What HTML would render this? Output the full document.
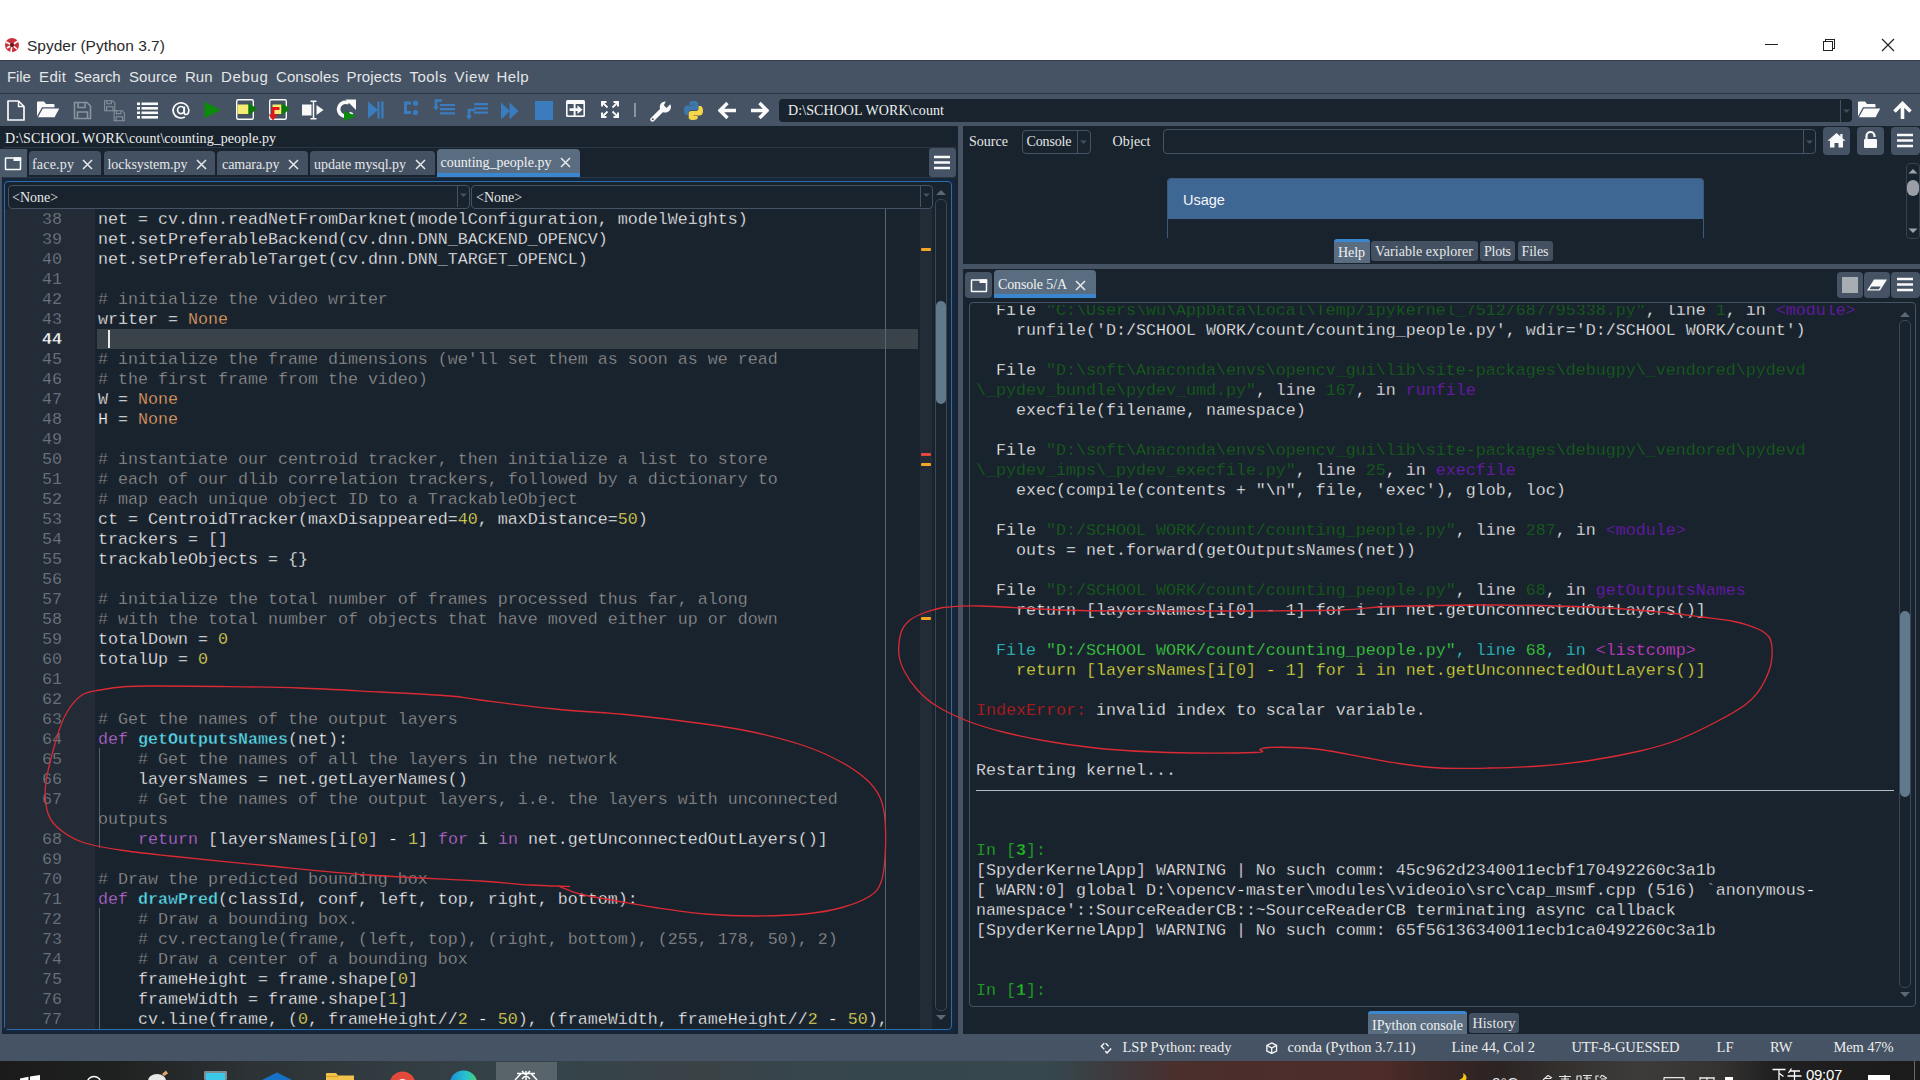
<!DOCTYPE html>
<html><head><meta charset="utf-8"><title>Spyder</title><style>
*{box-sizing:border-box;margin:0;padding:0}
html,body{width:1920px;height:1080px;overflow:hidden;background:#19232d}
body{position:relative;font-family:"Liberation Serif",serif;color:#e0e1e3;font-size:15px}
.abs{position:absolute}
.mono{font-family:"Liberation Mono",monospace;font-size:16.67px;line-height:20px;white-space:pre;letter-spacing:0;-webkit-text-stroke:0.35px #19232d}
.ln.mono{-webkit-text-stroke:0.35px #222b36}
.sans{font-family:"Liberation Sans",sans-serif}
.ui{font-family:"Liberation Serif",serif;font-size:15px;color:#e6e7e8;white-space:pre}
#titlebar{left:0;top:0;width:1920px;height:60px;background:#fff}
#menubar{left:0;top:60px;width:1920px;height:34px;background:#455364}
#toolbar{left:0;top:94px;width:1920px;height:32px;background:#455364}
.ln{color:#7f868e;text-align:right;width:58px;left:4px}
.cm{color:#9a9a9a}.kw{color:#c670e0}.nu{color:#faed5c}.fn{color:#57d6e4;font-weight:bold}.bi{color:#fab16c}
.w{color:#fff}
.dg{color:#146617}.dp{color:#7816c4}.cy{color:#2fd8d8}.lg{color:#3fe03f}.mg{color:#e040e0}.ye{color:#e8e83c}.rd{color:#d01818}.pg{color:#22c022}
</style></head><body>
<div id="titlebar" class="abs"></div>
<div class="abs sans" style="left:27px;top:35px;font-size:15.5px;color:#2a2a2a;line-height:22px;white-space:pre">Spyder (Python 3.7)</div>
<svg class="abs" style="left:4px;top:37px" width="16" height="16" viewBox="0 0 16 16"><circle cx="8" cy="8" r="7" fill="#c8303a"/><path d="M2 5 L8 8 L14 4 M8 8 L7 15 M3 11 L8 8 L13 12" stroke="#fff" stroke-width="1.6" fill="none"/><circle cx="8" cy="8" r="2.2" fill="#6b1a20"/></svg>
<svg class="abs" style="left:1750px;top:30px" width="160" height="30" viewBox="0 0 160 30"><path d="M15 14.5h13" stroke="#222" stroke-width="1"/><path d="M73.5 11.5h9v9h-9z M75.5 11.500v-2h9v9h-2" stroke="#222" stroke-width="1" fill="none" shape-rendering="crispEdges"/><path d="M132 9l12 12M144 9l-12 12" stroke="#222" stroke-width="1.2"/></svg>
<div id="menubar" class="abs"></div>
<div class="abs" style="left:0;top:60px;width:1920px;height:1px;background:#343f4d"></div>
<div class="abs" style="left:0;top:93px;width:1920px;height:1px;background:#2c3846"></div>
<div class="abs" style="left:7px;top:66px;font-family:'Liberation Sans',sans-serif;font-size:15px;line-height:22px;letter-spacing:-0.123px;color:#e4e6e8;white-space:pre;">File</div>
<div class="abs" style="left:39px;top:66px;font-family:'Liberation Sans',sans-serif;font-size:15px;line-height:22px;letter-spacing:0.384px;color:#e4e6e8;white-space:pre;">Edit</div>
<div class="abs" style="left:74px;top:66px;font-family:'Liberation Sans',sans-serif;font-size:15px;line-height:22px;letter-spacing:-0.185px;color:#e4e6e8;white-space:pre;">Search</div>
<div class="abs" style="left:129px;top:66px;font-family:'Liberation Sans',sans-serif;font-size:15px;line-height:22px;letter-spacing:0.095px;color:#e4e6e8;white-space:pre;">Source</div>
<div class="abs" style="left:185px;top:66px;font-family:'Liberation Sans',sans-serif;font-size:15px;line-height:22px;letter-spacing:0.041px;color:#e4e6e8;white-space:pre;">Run</div>
<div class="abs" style="left:221px;top:66px;font-family:'Liberation Sans',sans-serif;font-size:15px;line-height:22px;letter-spacing:0.650px;color:#e4e6e8;white-space:pre;">Debug</div>
<div class="abs" style="left:276px;top:66px;font-family:'Liberation Sans',sans-serif;font-size:15px;line-height:22px;letter-spacing:0.052px;color:#e4e6e8;white-space:pre;">Consoles</div>
<div class="abs" style="left:346.5px;top:66px;font-family:'Liberation Sans',sans-serif;font-size:15px;line-height:22px;letter-spacing:0.131px;color:#e4e6e8;white-space:pre;">Projects</div>
<div class="abs" style="left:409.5px;top:66px;font-family:'Liberation Sans',sans-serif;font-size:15px;line-height:22px;letter-spacing:0.471px;color:#e4e6e8;white-space:pre;">Tools</div>
<div class="abs" style="left:454.5px;top:66px;font-family:'Liberation Sans',sans-serif;font-size:15px;line-height:22px;letter-spacing:0.686px;color:#e4e6e8;white-space:pre;">View</div>
<div class="abs" style="left:496.5px;top:66px;font-family:'Liberation Sans',sans-serif;font-size:15px;line-height:22px;letter-spacing:0.417px;color:#e4e6e8;white-space:pre;">Help</div>
<div id="toolbar" class="abs"></div>
<div class="abs" style="left:779px;top:99px;width:1073px;height:23px;background:#19232d;border-radius:4px"></div>
<svg class="abs" style="left:6px;top:99px" width="21" height="23" viewBox="0 0 21 23"><path d="M2 2h10.5l5.500 5.500v13.500h-16z" fill="none" stroke="#fafafa" stroke-width="1.700" stroke-linejoin="round"/><path d="M12.500 2v5.500h5.500" fill="none" stroke="#fafafa" stroke-width="1.400"/></svg>
<svg class="abs" style="left:36px;top:100px" width="24" height="19" viewBox="0 0 24 19"><path d="M1 2.5q0-1 1-1h6l2 2.5h7.5q1 0 1 1v2.2h-12.5l-5 9z" fill="#fafafa"/><path d="M6.8 8.6h16.4l-4.6 8.6h-16.6z" fill="#fafafa"/></svg>
<svg class="abs" style="left:72px;top:100px" width="21" height="21" viewBox="0 0 21 21"><g transform="translate(1.5,1.5) scale(1.0)" fill="none" stroke="#8a939e" stroke-width="1.6"><path d="M1 1h12.5l3.5 3.5v12.5h-16z"/><path d="M4.5 1v5h7v-5" /><path d="M4 17v-6.5h10v6.5"/></g></svg>
<svg class="abs" style="left:103px;top:99px" width="24" height="24" viewBox="0 0 24 24"><g transform="translate(1,1) scale(0.6388888888888888)" fill="none" stroke="#8a939e" stroke-width="1.6"><path d="M1 1h12.5l3.5 3.5v12.5h-16z"/><path d="M4.5 1v5h7v-5" /><path d="M4 17v-6.5h10v6.5"/></g><g transform="translate(10.5,11) scale(0.6388888888888888)" fill="none" stroke="#8a939e" stroke-width="1.6"><path d="M1 1h12.5l3.5 3.5v12.5h-16z"/><path d="M4.5 1v5h7v-5" /><path d="M4 17v-6.5h10v6.5"/></g></svg>
<svg class="abs" style="left:137px;top:101px" width="22" height="19" viewBox="0 0 22 19"><rect x="0" y="1.5" width="3" height="2.6" fill="#fafafa"/><rect x="4.5" y="1.5" width="16.5" height="2.6" fill="#fafafa"/><rect x="0" y="6" width="3" height="2.6" fill="#fafafa"/><rect x="4.5" y="6" width="16.5" height="2.6" fill="#fafafa"/><rect x="0" y="10.5" width="3" height="2.6" fill="#fafafa"/><rect x="4.5" y="10.5" width="16.5" height="2.6" fill="#fafafa"/><rect x="0" y="15" width="3" height="2.6" fill="#fafafa"/><rect x="4.5" y="15" width="16.5" height="2.6" fill="#fafafa"/></svg>
<svg class="abs" style="left:171px;top:101px" width="21" height="20" viewBox="0 0 21 20"><g transform="scale(1.080)"><path d="M12.300 5.200v5.600q0 1.700 1.500 1.700q2.700 0 2.700-4.200A7.300 7 0 1 0 12.800 14.800" fill="none" stroke="#fafafa" stroke-width="1.600"/><ellipse cx="9.200" cy="8.400" rx="3.100" ry="3.300" fill="none" stroke="#fafafa" stroke-width="1.600"/></g></svg>
<svg class="abs" style="left:204px;top:101px" width="18" height="18" viewBox="0 0 18 18"><path d="M0.5 0.8L17 9L0.5 17.2z" fill="#0c8a0c"/></svg>
<svg class="abs" style="left:235px;top:98px" width="24" height="23" viewBox="0 0 24 23"><rect x="1.700" y="1.700" width="16.600" height="19.600" rx="1.500" fill="none" stroke="#fafafa" stroke-width="1.400"/><rect x="2.500" y="6.500" width="11" height="9.500" fill="#f6ec72"/><path d="M13.500 4.500L22 11L13.500 17.500z" fill="#0b7a0b"/></svg>
<svg class="abs" style="left:267px;top:98px" width="25" height="23" viewBox="0 0 25 23"><rect x="2.700" y="1.700" width="16.600" height="19.600" rx="1.500" fill="none" stroke="#fafafa" stroke-width="1.400"/><rect x="5.500" y="6.500" width="9" height="9.500" fill="#f6ec72"/><path d="M14.500 4.500L23 11L14.500 17.500z" fill="#0b7a0b"/><path d="M12.500 10.500h-6.500v8.500" fill="none" stroke="#e41818" stroke-width="3"/><path d="M1.500 16.500h9L6 22.500z" fill="#e41818"/></svg>
<svg class="abs" style="left:301px;top:100px" width="24" height="20" viewBox="0 0 24 20"><rect x="1" y="4.500" width="9.500" height="11" fill="#fafafa"/><path d="M9.500 1.200h6M9.500 18.800h6M12.500 1.200v17.600" stroke="#fafafa" stroke-width="1.500" fill="none"/><path d="M15.500 5L22.500 10L15.500 15z" fill="#fafafa"/></svg>
<svg class="abs" style="left:335px;top:99px" width="24" height="22" viewBox="0 0 24 22"><path d="M13.800 4A7 7 0 1 0 16.800 13.500" fill="none" stroke="#fafafa" stroke-width="3.600"/><path d="M10.500 0.500h10.500v10.500z" fill="#fafafa"/><path d="M9 12L21.500 17L9 22z" fill="#0b8a0b"/></svg>
<svg class="abs" style="left:367px;top:100px" width="18" height="21" viewBox="0 0 18 21"><path d="M1 1.5L11 10L1 18.5z" fill="#3a7cbe"/><rect x="10.4" y="1.5" width="2.2" height="17" fill="#3a7cbe"/><rect x="14.2" y="1.5" width="2.4" height="17" fill="#3a7cbe"/></svg>
<svg class="abs" style="left:402px;top:100px" width="19" height="17" viewBox="0 0 19 17"><path d="M9 3H3.5v9.5H9" fill="none" stroke="#3a7cbe" stroke-width="3"/><circle cx="13.5" cy="3.2" r="2.6" fill="#3a7cbe"/><circle cx="13.5" cy="12.5" r="2.6" fill="#3a7cbe"/></svg>
<svg class="abs" style="left:433px;top:98px" width="23" height="18" viewBox="0 0 23 18"><path d="M9 2.5H3v7" fill="none" stroke="#3a7cbe" stroke-width="2.6"/><path d="M7 7h15M7 11.2h15M7 15.4h15" stroke="#3a7cbe" stroke-width="2.2"/><path d="M0 8.5h6L3 12.5z" fill="#3a7cbe"/></svg>
<svg class="abs" style="left:466px;top:102px" width="23" height="19" viewBox="0 0 23 19"><path d="M8 2.2h14M8 6.4h14M8 10.6h14" stroke="#3a7cbe" stroke-width="2.2"/><path d="M9 8H3v7.5" fill="none" stroke="#3a7cbe" stroke-width="2.6"/><path d="M3 12.5h7" stroke="#3a7cbe" stroke-width="0"/><path d="M0 13.5h6L3 18z" fill="#3a7cbe"/></svg>
<svg class="abs" style="left:500px;top:102px" width="20" height="18" viewBox="0 0 20 18"><path d="M1 0.5L10 9L1 17.5z" fill="#3a7cbe"/><path d="M9.5 0.5L18.5 9L9.5 17.5z" fill="#3a7cbe"/></svg>
<svg class="abs" style="left:535px;top:101px" width="18" height="19" viewBox="0 0 18 19"><rect x="0" y="0" width="18" height="19" fill="#3a7cbe"/></svg>
<svg class="abs" style="left:565px;top:99px" width="21" height="19" viewBox="0 0 21 19"><rect x="1" y="1" width="19" height="17" rx="1.5" fill="#fafafa"/><rect x="2.6" y="5" width="6" height="11.4" fill="#455364"/><rect x="10.6" y="5" width="7.8" height="11.4" fill="#455364"/><path d="M4.5 9.3h8v-3l5 4.4l-5 4.4v-3h-8z" fill="#fafafa"/></svg>
<svg class="abs" style="left:601px;top:101px" width="18" height="17" viewBox="0 0 18 17"><path d="M1 5.5V1h4.5M12.5 1H17v4.5M17 11.5V16h-4.5M5.5 16H1v-4.5" fill="none" stroke="#fafafa" stroke-width="2"/><path d="M1.5 1.5L6.5 6.5M16.5 1.5L11.5 6.5M16.5 15.5L11.5 10.5M1.5 15.5L6.5 10.5" stroke="#fafafa" stroke-width="1.8"/></svg>
<div class="abs" style="left:634px;top:103px;width:2px;height:14px;background:#8a939e"></div>
<svg class="abs" style="left:650px;top:100px" width="22" height="22" viewBox="0 0 22 22"><path d="M2.5 19.5L12.5 9.5" stroke="#fafafa" stroke-width="4.4" stroke-linecap="round"/><path d="M20.2 4.2A5.6 5.6 0 1 1 15.8 1.4L13.8 5.2L16.6 8L20.2 4.2z" fill="#fafafa"/><circle cx="2.8" cy="19.2" r="1" fill="#455364"/></svg>
<svg class="abs" style="left:683px;top:100px" width="21" height="21" viewBox="0 0 21 21"><path d="M10.3 1C6 1 6.3 2.9 6.3 2.9v2h4.2v.7H4.2S1 5.2 1 10.2s2.8 4.8 2.8 4.8h1.7v-2.3s-.1-2.8 2.7-2.8h4.5s2.600.1 2.600-2.500V3.600S15.700 1 10.300 1z" fill="#3c78aa"/><path d="M10.700 20C15 20 14.700 18.100 14.700 18.100v-2h-4.200v-.7h6.300s3.200.4 3.200-4.600-2.800-4.800-2.800-4.800h-1.700v2.300s.1 2.800-2.700 2.800H8.300s-2.600-.1-2.600 2.500v3.800S5.300 20 10.700 20z" fill="#f7d44a"/></svg>
<svg class="abs" style="left:718px;top:101px" width="19" height="19" viewBox="0 0 19 19"><path d="M18 9.500H3M9.500 2L2 9.500L9.500 17" fill="none" stroke="#fafafa" stroke-width="3.400" stroke-linejoin="miter"/></svg>
<svg class="abs" style="left:750px;top:101px" width="19" height="19" viewBox="0 0 19 19"><path d="M1 9.500H16M9.500 2L17 9.500L9.500 17" fill="none" stroke="#fafafa" stroke-width="3.400" stroke-linejoin="miter"/></svg>
<div class="abs" style="left:1840px;top:100px;width:1px;height:22px;background:#455364"></div>
<svg class="abs" style="left:1842px;top:108px" width="9" height="6" viewBox="0 0 9 6"><path d="M1 1.500L4.500 5L8 1.500z" fill="#434f5d"/></svg>
<svg class="abs" style="left:1857px;top:100px" width="24" height="19" viewBox="0 0 24 19"><path d="M1 2.500q0-1 1-1h6l2 2.500h7.500q1 0 1 1v2.200h-12.500l-5 9z" fill="#fafafa"/><path d="M6.800 8.600h16.400l-4.600 8.600h-16.600z" fill="#fafafa"/></svg>
<svg class="abs" style="left:1892px;top:101px" width="21" height="19" viewBox="0 0 21 19"><path d="M10.500 18V4M2.500 10.500L10.500 2.500L18.500 10.500" fill="none" stroke="#fafafa" stroke-width="3.600"/></svg>
<div class="abs" style="left:788px;top:102px;font-family:'Liberation Serif',serif;font-size:14px;line-height:18px;letter-spacing:0.085px;color:#eeeff0;white-space:pre;">D:\SCHOOL WORK\count</div>
<div class="abs" style="left:0;top:126px;width:958px;height:23px;background:#19232d"></div>
<div class="abs" style="left:5px;top:130px;font-family:'Liberation Serif',serif;font-size:14px;line-height:18px;letter-spacing:0.050px;color:#eeeff0;white-space:pre;">D:\SCHOOL WORK\count\counting_people.py</div>
<div class="abs" style="left:958px;top:126px;width:5px;height:909px;background:#455364"></div>
<div class="abs" style="left:0;top:149px;width:2px;height:886px;background:#455364"></div>
<div class="abs" style="left:3px;top:147px;width:953px;height:1px;background:#2b3744"></div>
<div class="abs" style="left:3px;top:177px;width:953px;height:1px;background:#2b3744"></div>
<div class="abs" style="left:0px;top:149px;width:27px;height:28px;background:#4a596a"></div>
<svg class="abs" style="left:4px;top:156px" width="18" height="15" viewBox="0 0 18 15"><rect x="1.500" y="2" width="15" height="11.500" rx="0.500" fill="none" stroke="#fafafa" stroke-width="1.500"/><rect x="9.500" y="1.300" width="7.700" height="3.700" fill="#fafafa"/></svg>
<div class="abs" style="left:29px;top:151px;width:72px;height:24px;background:#435162;border-radius:4px 4px 0 0"></div>
<div class="abs" style="left:32px;top:155.5px;font-family:'Liberation Serif',serif;font-size:14px;line-height:18px;letter-spacing:0.199px;color:#e6e7e8;white-space:pre;">face.py</div>
<svg class="abs" style="left:82px;top:159px" width="11" height="11" viewBox="0 0 11 11"><path d="M1 1L10 10M10 1L1 10" stroke="#e8e9ea" stroke-width="1.500"/></svg>
<div class="abs" style="left:104px;top:151px;width:111px;height:24px;background:#435162;border-radius:4px 4px 0 0"></div>
<div class="abs" style="left:107.5px;top:155.5px;font-family:'Liberation Serif',serif;font-size:14px;line-height:18px;letter-spacing:-0.041px;color:#e6e7e8;white-space:pre;">locksystem.py</div>
<svg class="abs" style="left:196px;top:159px" width="11" height="11" viewBox="0 0 11 11"><path d="M1 1L10 10M10 1L1 10" stroke="#e8e9ea" stroke-width="1.500"/></svg>
<div class="abs" style="left:217px;top:151px;width:91px;height:24px;background:#435162;border-radius:4px 4px 0 0"></div>
<div class="abs" style="left:222px;top:155.5px;font-family:'Liberation Serif',serif;font-size:14px;line-height:18px;letter-spacing:-0.051px;color:#e6e7e8;white-space:pre;">camara.py</div>
<svg class="abs" style="left:287.5px;top:159px" width="11" height="11" viewBox="0 0 11 11"><path d="M1 1L10 10M10 1L1 10" stroke="#e8e9ea" stroke-width="1.500"/></svg>
<div class="abs" style="left:310px;top:151px;width:125px;height:24px;background:#435162;border-radius:4px 4px 0 0"></div>
<div class="abs" style="left:314px;top:155.5px;font-family:'Liberation Serif',serif;font-size:14px;line-height:18px;letter-spacing:-0.039px;color:#e6e7e8;white-space:pre;">update mysql.py</div>
<svg class="abs" style="left:415px;top:159px" width="11" height="11" viewBox="0 0 11 11"><path d="M1 1L10 10M10 1L1 10" stroke="#e8e9ea" stroke-width="1.500"/></svg>
<div class="abs" style="left:437px;top:149px;width:143px;height:28px;background:#5a6d80;border-radius:4px 4px 0 0;border-bottom:4px solid #3a87cf"></div>
<div class="abs" style="left:440.5px;top:154px;font-family:'Liberation Serif',serif;font-size:14px;line-height:18px;letter-spacing:0.011px;color:#f0f1f2;white-space:pre;">counting_people.py</div>
<svg class="abs" style="left:560px;top:157px" width="11" height="11" viewBox="0 0 11 11"><path d="M1 1L10 10M10 1L1 10" stroke="#e8e9ea" stroke-width="1.500"/></svg>
<div class="abs" style="left:929px;top:148px;width:27px;height:29px;background:#455364;border-radius:3px"></div>
<svg class="abs" style="left:934px;top:155px" width="17" height="15" viewBox="0 0 17 15"><path d="M0 2h16M0 7.500h16M0 13h16" stroke="#fafafa" stroke-width="2.600"/></svg>
<div class="abs" style="left:2px;top:178px;width:954px;height:855px;background:#14273c;border-radius:4px"></div>
<div class="abs" style="left:4px;top:181px;width:948px;height:849px;border:1px solid #2c6cab;border-radius:4px;background:#19232d"></div>
<div class="abs" style="left:7.500px;top:184.500px;width:462px;height:24px;border:1px solid #455364;border-radius:4px;background:#19232d"></div>
<div class="abs" style="left:457px;top:185px;width:1px;height:22px;background:#455364"></div>
<div class="abs" style="left:470.500px;top:184.500px;width:462.500px;height:24px;border:1px solid #455364;border-radius:4px;background:#19232d"></div>
<div class="abs" style="left:920px;top:185px;width:1px;height:22px;background:#455364"></div>
<svg class="abs" style="left:459px;top:192px" width="9" height="6"><path d="M1 1.500 L4.500 5 L8 1.500z" fill="#465260"/></svg>
<svg class="abs" style="left:922px;top:192px" width="9" height="6"><path d="M1 1.500 L4.500 5 L8 1.500z" fill="#465260"/></svg>
<div class="abs ui" style="left:12px;top:189px;line-height:18px;font-size:14px">&lt;None&gt;</div>
<div class="abs ui" style="left:476px;top:189px;line-height:18px;font-size:14px">&lt;None&gt;</div>
<div class="abs" style="left:5px;top:209px;width:90px;height:820px;background:#222b36"></div>
<div class="abs" style="left:920px;top:209px;width:12px;height:820px;background:#222b36"></div>
<div class="abs" style="left:97px;top:329px;width:821px;height:20px;background:#3a424a"></div>
<div class="abs" style="left:885px;top:209px;width:1px;height:820px;background:#5a6570"></div>
<div class="abs" style="left:108px;top:330px;width:2px;height:18px;background:#e8e8e8"></div>
<div class="abs" style="left:99px;top:748px;width:1px;height:100px;background:#56616d"></div>
<div class="abs" style="left:99px;top:908px;width:1px;height:121px;background:#56616d"></div>
<div class="abs" style="left:0;top:209px;width:920px;height:820px;overflow:hidden">
<div class="abs mono ln" style="top:1px">38</div>
<div class="abs mono w" style="left:98px;top:1px">net = cv.dnn.readNetFromDarknet(modelConfiguration, modelWeights)</div>
<div class="abs mono ln" style="top:21px">39</div>
<div class="abs mono w" style="left:98px;top:21px">net.setPreferableBackend(cv.dnn.DNN_BACKEND_OPENCV)</div>
<div class="abs mono ln" style="top:41px">40</div>
<div class="abs mono w" style="left:98px;top:41px">net.setPreferableTarget(cv.dnn.DNN_TARGET_OPENCL)</div>
<div class="abs mono ln" style="top:61px">41</div>
<div class="abs mono ln" style="top:81px">42</div>
<div class="abs mono w" style="left:98px;top:81px"><span class="cm"># initialize the video writer</span></div>
<div class="abs mono ln" style="top:101px">43</div>
<div class="abs mono w" style="left:98px;top:101px">writer = <span class="bi">None</span></div>
<div class="abs mono ln" style="color:#fff;font-weight:bold;top:121px">44</div>
<div class="abs mono ln" style="top:141px">45</div>
<div class="abs mono w" style="left:98px;top:141px"><span class="cm"># initialize the frame dimensions (we&#x27;ll set them as soon as we read</span></div>
<div class="abs mono ln" style="top:161px">46</div>
<div class="abs mono w" style="left:98px;top:161px"><span class="cm"># the first frame from the video)</span></div>
<div class="abs mono ln" style="top:181px">47</div>
<div class="abs mono w" style="left:98px;top:181px">W = <span class="bi">None</span></div>
<div class="abs mono ln" style="top:201px">48</div>
<div class="abs mono w" style="left:98px;top:201px">H = <span class="bi">None</span></div>
<div class="abs mono ln" style="top:221px">49</div>
<div class="abs mono ln" style="top:241px">50</div>
<div class="abs mono w" style="left:98px;top:241px"><span class="cm"># instantiate our centroid tracker, then initialize a list to store</span></div>
<div class="abs mono ln" style="top:261px">51</div>
<div class="abs mono w" style="left:98px;top:261px"><span class="cm"># each of our dlib correlation trackers, followed by a dictionary to</span></div>
<div class="abs mono ln" style="top:281px">52</div>
<div class="abs mono w" style="left:98px;top:281px"><span class="cm"># map each unique object ID to a TrackableObject</span></div>
<div class="abs mono ln" style="top:301px">53</div>
<div class="abs mono w" style="left:98px;top:301px">ct = CentroidTracker(maxDisappeared=<span class="nu">40</span>, maxDistance=<span class="nu">50</span>)</div>
<div class="abs mono ln" style="top:321px">54</div>
<div class="abs mono w" style="left:98px;top:321px">trackers = []</div>
<div class="abs mono ln" style="top:341px">55</div>
<div class="abs mono w" style="left:98px;top:341px">trackableObjects = {}</div>
<div class="abs mono ln" style="top:361px">56</div>
<div class="abs mono ln" style="top:381px">57</div>
<div class="abs mono w" style="left:98px;top:381px"><span class="cm"># initialize the total number of frames processed thus far, along</span></div>
<div class="abs mono ln" style="top:401px">58</div>
<div class="abs mono w" style="left:98px;top:401px"><span class="cm"># with the total number of objects that have moved either up or down</span></div>
<div class="abs mono ln" style="top:421px">59</div>
<div class="abs mono w" style="left:98px;top:421px">totalDown = <span class="nu">0</span></div>
<div class="abs mono ln" style="top:441px">60</div>
<div class="abs mono w" style="left:98px;top:441px">totalUp = <span class="nu">0</span></div>
<div class="abs mono ln" style="top:461px">61</div>
<div class="abs mono ln" style="top:481px">62</div>
<div class="abs mono ln" style="top:501px">63</div>
<div class="abs mono w" style="left:98px;top:501px"><span class="cm"># Get the names of the output layers</span></div>
<div class="abs mono ln" style="top:521px">64</div>
<div class="abs mono w" style="left:98px;top:521px"><span class="kw">def</span><span class="fn"> </span><span class="fn">getOutputsNames</span>(net):</div>
<div class="abs mono ln" style="top:541px">65</div>
<div class="abs mono w" style="left:98px;top:541px">    <span class="cm"># Get the names of all the layers in the network</span></div>
<div class="abs mono ln" style="top:561px">66</div>
<div class="abs mono w" style="left:98px;top:561px">    layersNames = net.getLayerNames()</div>
<div class="abs mono ln" style="top:581px">67</div>
<div class="abs mono w" style="left:98px;top:581px">    <span class="cm"># Get the names of the output layers, i.e. the layers with unconnected</span></div>
<div class="abs mono w" style="left:98px;top:601px"><span class="cm">outputs</span></div>
<div class="abs mono ln" style="top:621px">68</div>
<div class="abs mono w" style="left:98px;top:621px">    <span class="kw">return</span> [layersNames[i[<span class="nu">0</span>] - <span class="nu">1</span>] <span class="kw">for</span> i <span class="kw">in</span> net.getUnconnectedOutLayers()]</div>
<div class="abs mono ln" style="top:641px">69</div>
<div class="abs mono ln" style="top:661px">70</div>
<div class="abs mono w" style="left:98px;top:661px"><span class="cm"># Draw the predicted bounding box</span></div>
<div class="abs mono ln" style="top:681px">71</div>
<div class="abs mono w" style="left:98px;top:681px"><span class="kw">def</span><span class="fn"> </span><span class="fn">drawPred</span>(classId, conf, left, top, right, bottom):</div>
<div class="abs mono ln" style="top:701px">72</div>
<div class="abs mono w" style="left:98px;top:701px">    <span class="cm"># Draw a bounding box.</span></div>
<div class="abs mono ln" style="top:721px">73</div>
<div class="abs mono w" style="left:98px;top:721px">    <span class="cm"># cv.rectangle(frame, (left, top), (right, bottom), (255, 178, 50), 2)</span></div>
<div class="abs mono ln" style="top:741px">74</div>
<div class="abs mono w" style="left:98px;top:741px">    <span class="cm"># Draw a center of a bounding box</span></div>
<div class="abs mono ln" style="top:761px">75</div>
<div class="abs mono w" style="left:98px;top:761px">    frameHeight = frame.shape[<span class="nu">0</span>]</div>
<div class="abs mono ln" style="top:781px">76</div>
<div class="abs mono w" style="left:98px;top:781px">    frameWidth = frame.shape[<span class="nu">1</span>]</div>
<div class="abs mono ln" style="top:801px">77</div>
<div class="abs mono w" style="left:98px;top:801px">    cv.line(frame, (<span class="nu">0</span>, frameHeight//<span class="nu">2</span> - <span class="nu">50</span>), (frameWidth, frameHeight//<span class="nu">2</span> - <span class="nu">50</span>),</div>
</div>
<div class="abs" style="left:921px;top:248px;width:10px;height:3px;background:#f5a623;border-radius:1px"></div>
<div class="abs" style="left:921px;top:453px;width:10px;height:3px;background:#e8453c;border-radius:1px"></div>
<div class="abs" style="left:921px;top:463px;width:10px;height:3px;background:#f5a623;border-radius:1px"></div>
<div class="abs" style="left:921px;top:617px;width:10px;height:3px;background:#f5a623;border-radius:1px"></div>
<div class="abs" style="left:935px;top:199px;width:12px;height:812px;border:1px solid #3a4756;border-radius:5px;background:#19232d"></div>
<div class="abs" style="left:936px;top:301px;width:10px;height:103px;background:#60798b;border-radius:5px"></div>
<svg class="abs" style="left:936px;top:189px" width="10" height="7"><path d="M0 6 L5 1 L10 6z" fill="#5a6878"/></svg>
<svg class="abs" style="left:936px;top:1014px" width="10" height="7"><path d="M0 1 L5 6 L10 1z" fill="#5a6878"/></svg>
<div class="abs" style="left:963px;top:126px;width:957px;height:138px;background:#19232d"></div>
<div class="abs" style="left:969px;top:133px;font-family:'Liberation Serif',serif;font-size:14px;line-height:18px;letter-spacing:0.025px;color:#e6e7e8;white-space:pre;">Source</div>
<div class="abs" style="left:1022px;top:130px;width:69px;height:24px;border:1px solid #455364;border-radius:4px"></div>
<div class="abs" style="left:1077px;top:131px;width:1px;height:22px;background:#455364"></div>
<svg class="abs" style="left:1079px;top:139px" width="9" height="6" viewBox="0 0 9 6"><path d="M1 1.500L4.500 5L8 1.500z" fill="#434f5d"/></svg>
<div class="abs" style="left:1026.5px;top:133px;font-family:'Liberation Serif',serif;font-size:14px;line-height:18px;letter-spacing:-0.148px;color:#e6e7e8;white-space:pre;">Console</div>
<div class="abs" style="left:1112.5px;top:133px;font-family:'Liberation Serif',serif;font-size:14px;line-height:18px;letter-spacing:0.137px;color:#e6e7e8;white-space:pre;">Object</div>
<div class="abs" style="left:1163px;top:129px;width:653px;height:25px;border:1px solid #455364;border-radius:4px"></div>
<div class="abs" style="left:1803px;top:130px;width:1px;height:23px;background:#455364"></div>
<svg class="abs" style="left:1805px;top:139px" width="9" height="6" viewBox="0 0 9 6"><path d="M1 1.500L4.500 5L8 1.500z" fill="#434f5d"/></svg>
<div class="abs" style="left:1823px;top:127px;width:27px;height:28px;background:#455364;border-radius:4px"></div>
<div class="abs" style="left:1857px;top:127px;width:27px;height:28px;background:#455364;border-radius:4px"></div>
<div class="abs" style="left:1891px;top:127px;width:29px;height:28px;background:#455364;border-radius:4px"></div>
<svg class="abs" style="left:1827px;top:132px" width="19" height="16" viewBox="0 0 19 16"><path d="M9.500 1L0.500 8.800h2.500V15.500h4.500v-4.500h4v4.500h4.500V8.800h2.500z" fill="#fafafa"/><rect x="13.300" y="2" width="2.200" height="4" fill="#fafafa"/></svg>
<svg class="abs" style="left:1863px;top:130px" width="15" height="19" viewBox="0 0 15 19"><rect x="1" y="9" width="13" height="9" rx="1" fill="#fafafa"/><path d="M3.500 9.500V6a4 4 0 0 1 8 0v1" fill="none" stroke="#fafafa" stroke-width="2.200"/></svg>
<svg class="abs" style="left:1897px;top:133px" width="17" height="15" viewBox="0 0 17 15"><path d="M0 2h16M0 7.500h16M0 13h16" stroke="#fafafa" stroke-width="2.600"/></svg>
<div class="abs" style="left:1167px;top:178px;width:537px;height:60px;border:1px solid #3e5878;border-bottom:none;border-radius:4px 4px 0 0;overflow:hidden"><div style="height:40px;background:#3f6794"></div></div>
<div class="abs sans" style="left:1183px;top:189px;font-size:14.500px;line-height:22px;color:#f4f6f8">Usage</div>
<div class="abs" style="left:1906px;top:163px;width:14px;height:76px;border:1px solid #36424f;border-radius:4px"></div>
<svg class="abs" style="left:1908px;top:168px" width="10" height="6" viewBox="0 0 10 6"><path d="M0.500 5.500L5 1L9.500 5.500z" fill="#9aa3ad"/></svg>
<svg class="abs" style="left:1908px;top:228px" width="10" height="6" viewBox="0 0 10 6"><path d="M0.500 0.500L5 5L9.500 0.500z" fill="#9aa3ad"/></svg>
<div class="abs" style="left:1907px;top:180px;width:12px;height:16px;border-radius:6px;background:#9a9fa5"></div>
<div class="abs" style="left:1334px;top:239px;width:36px;height:24px;background:#5a6d80;border-top:3px solid #3a87cf;border-radius:3px 3px 0 0"></div>
<div class="abs" style="left:1338px;top:244px;font-family:'Liberation Serif',serif;font-size:14px;line-height:18px;letter-spacing:-0.071px;color:#f0f1f2;white-space:pre;">Help</div>
<div class="abs" style="left:1371px;top:241px;width:107px;height:20px;background:#435061;border-radius:3px"></div>
<div class="abs" style="left:1375px;top:243px;font-family:'Liberation Serif',serif;font-size:14px;line-height:18px;letter-spacing:0.076px;color:#e6e7e8;white-space:pre;">Variable explorer</div>
<div class="abs" style="left:1480px;top:241px;width:35px;height:20px;background:#435061;border-radius:3px"></div>
<div class="abs" style="left:1484px;top:243px;font-family:'Liberation Serif',serif;font-size:14px;line-height:18px;letter-spacing:-0.253px;color:#e6e7e8;white-space:pre;">Plots</div>
<div class="abs" style="left:1518px;top:241px;width:35px;height:20px;background:#435061;border-radius:3px"></div>
<div class="abs" style="left:1521.5px;top:243px;font-family:'Liberation Serif',serif;font-size:14px;line-height:18px;letter-spacing:-0.057px;color:#e6e7e8;white-space:pre;">Files</div>
<div class="abs" style="left:963px;top:264px;width:957px;height:5px;background:#455364"></div>
<div class="abs" style="left:963px;top:269px;width:957px;height:766px;background:#19232d"></div>
<div class="abs" style="left:965px;top:272px;width:27px;height:26px;background:#455364;border-radius:4px"></div>
<svg class="abs" style="left:970px;top:278px" width="18" height="15" viewBox="0 0 18 15"><rect x="1.500" y="2" width="15" height="11.500" rx="0.500" fill="none" stroke="#fafafa" stroke-width="1.500"/><rect x="9.500" y="1.300" width="7.700" height="3.700" fill="#fafafa"/></svg>
<div class="abs" style="left:994px;top:270px;width:102px;height:28px;background:#5a6d80;border-radius:4px 4px 0 0;border-bottom:4px solid #3a87cf"></div>
<div class="abs" style="left:998px;top:276px;font-family:'Liberation Serif',serif;font-size:14px;line-height:18px;letter-spacing:-0.139px;color:#f0f1f2;white-space:pre;">Console 5/A</div>
<svg class="abs" style="left:1075px;top:280px" width="11" height="11" viewBox="0 0 11 11"><path d="M1 1L10 10M10 1L1 10" stroke="#e8e9ea" stroke-width="1.500"/></svg>
<div class="abs" style="left:1837px;top:272px;width:26px;height:26px;background:#455364;border-radius:4px"></div>
<div class="abs" style="left:1864px;top:272px;width:26px;height:26px;background:#455364;border-radius:4px"></div>
<div class="abs" style="left:1891px;top:272px;width:29px;height:26px;background:#455364;border-radius:4px"></div>
<div class="abs" style="left:1842px;top:277px;width:16px;height:16px;background:#a8adb2"></div>
<svg class="abs" style="left:1866px;top:277px" width="22" height="16" viewBox="0 0 22 16"><path d="M8 2.500h13l-7 11h-13z" fill="#fafafa"/><path d="M5.300 9.500h9.400l-1.800 2.800h-9.400z" fill="#455364"/></svg>
<svg class="abs" style="left:1897px;top:277px" width="17" height="15" viewBox="0 0 17 15"><path d="M0 2h16M0 7.500h16M0 13h16" stroke="#fafafa" stroke-width="2.600"/></svg>
<div class="abs" style="left:969px;top:302px;width:947px;height:705px;border:1px solid #455364;border-radius:4px"></div>
<div class="abs" style="left:970px;top:305px;width:925px;height:699px;overflow:hidden">
<div class="abs mono w" style="left:6px;top:-4px">  File <span class="dg">&quot;C:\Users\wu\AppData\Local\Temp/ipykernel_7512/687795338.py&quot;</span>, line <span class="dg">1</span>, in <span class="dp">&lt;module&gt;</span></div>
<div class="abs mono w" style="left:6px;top:16px">    runfile(&#x27;D:/SCHOOL WORK/count/counting_people.py&#x27;, wdir=&#x27;D:/SCHOOL WORK/count&#x27;)</div>
<div class="abs mono w" style="left:6px;top:56px">  File <span class="dg">&quot;D:\soft\Anaconda\envs\opencv_gui\lib\site-packages\debugpy\_vendored\pydevd</span></div>
<div class="abs mono w" style="left:6px;top:76px"><span class="dg">\_pydev_bundle\pydev_umd.py&quot;</span>, line <span class="dg">167</span>, in <span class="dp">runfile</span></div>
<div class="abs mono w" style="left:6px;top:96px">    execfile(filename, namespace)</div>
<div class="abs mono w" style="left:6px;top:136px">  File <span class="dg">&quot;D:\soft\Anaconda\envs\opencv_gui\lib\site-packages\debugpy\_vendored\pydevd</span></div>
<div class="abs mono w" style="left:6px;top:156px"><span class="dg">\_pydev_imps\_pydev_execfile.py&quot;</span>, line <span class="dg">25</span>, in <span class="dp">execfile</span></div>
<div class="abs mono w" style="left:6px;top:176px">    exec(compile(contents + &quot;\n&quot;, file, &#x27;exec&#x27;), glob, loc)</div>
<div class="abs mono w" style="left:6px;top:216px">  File <span class="dg">&quot;D:/SCHOOL WORK/count/counting_people.py&quot;</span>, line <span class="dg">287</span>, in <span class="dp">&lt;module&gt;</span></div>
<div class="abs mono w" style="left:6px;top:236px">    outs = net.forward(getOutputsNames(net))</div>
<div class="abs mono w" style="left:6px;top:276px">  File <span class="dg">&quot;D:/SCHOOL WORK/count/counting_people.py&quot;</span>, line <span class="dg">68</span>, in <span class="dp">getOutputsNames</span></div>
<div class="abs mono w" style="left:6px;top:296px">    return [layersNames[i[0] - 1] for i in net.getUnconnectedOutLayers()]</div>
<div class="abs mono w" style="left:6px;top:336px"><span class="cy">  File </span><span class="lg">&quot;D:/SCHOOL WORK/count/counting_people.py&quot;</span><span class="cy">, line </span><span class="lg">68</span><span class="cy">, in </span><span class="mg">&lt;listcomp&gt;</span></div>
<div class="abs mono w" style="left:6px;top:356px"><span class="ye">    return [layersNames[i[0] - 1] for i in net.getUnconnectedOutLayers()]</span></div>
<div class="abs mono w" style="left:6px;top:396px"><span class="rd">IndexError:</span> invalid index to scalar variable.</div>
<div class="abs mono w" style="left:6px;top:456px">Restarting kernel...</div>
<div class="abs" style="left:6px;top:485px;width:918px;height:1px;background:#b8bcc0"></div>
<div class="abs mono w" style="left:6px;top:536px"><span class="pg">In [<b>3</b>]:</span></div>
<div class="abs mono w" style="left:6px;top:556px">[SpyderKernelApp] WARNING | No such comm: 45c962d2340011ecbf170492260c3a1b</div>
<div class="abs mono w" style="left:6px;top:576px">[ WARN:0] global D:\opencv-master\modules\videoio\src\cap_msmf.cpp (516) `anonymous-</div>
<div class="abs mono w" style="left:6px;top:596px">namespace&#x27;::SourceReaderCB::~SourceReaderCB terminating async callback</div>
<div class="abs mono w" style="left:6px;top:616px">[SpyderKernelApp] WARNING | No such comm: 65f56136340011ecb1ca0492260c3a1b</div>
<div class="abs mono w" style="left:6px;top:676px"><span class="pg">In [<b>1</b>]:</span></div>
</div>
<div class="abs" style="left:1899px;top:320px;width:12px;height:668px;border:1px solid #3a4756;border-radius:5px"></div>
<div class="abs" style="left:1900px;top:611px;width:10px;height:186px;background:#60798b;border-radius:5px"></div>
<svg class="abs" style="left:1900px;top:311px" width="10" height="7" viewBox="0 0 10 7"><path d="M0 6L5 1L10 6z" fill="#5a6878"/></svg>
<svg class="abs" style="left:1900px;top:991px" width="10" height="7" viewBox="0 0 10 7"><path d="M0 1L5 6L10 1z" fill="#5a6878"/></svg>
<div class="abs" style="left:1368px;top:1011px;width:99px;height:24px;background:#5a6d80;border-top:3px solid #3a87cf;border-radius:3px 3px 0 0"></div>
<div class="abs" style="left:1372px;top:1017px;font-family:'Liberation Serif',serif;font-size:14px;line-height:18px;letter-spacing:0.028px;color:#f0f1f2;white-space:pre;">IPython console</div>
<div class="abs" style="left:1469px;top:1013px;width:50px;height:20px;background:#435061;border-radius:3px"></div>
<div class="abs" style="left:1472.5px;top:1015px;font-family:'Liberation Serif',serif;font-size:14px;line-height:18px;letter-spacing:0.167px;color:#e6e7e8;white-space:pre;">History</div>
<div class="abs" style="left:0;top:1034px;width:1920px;height:27px;background:#455364"></div>
<div class="abs" style="left:1122.5px;top:1038px;font-family:'Liberation Serif',serif;font-size:14.5px;line-height:19px;letter-spacing:-0.001px;color:#eceded;white-space:pre;">LSP Python: ready</div>
<div class="abs" style="left:1287.5px;top:1038px;font-family:'Liberation Serif',serif;font-size:14.5px;line-height:19px;letter-spacing:-0.017px;color:#eceded;white-space:pre;">conda (Python 3.7.11)</div>
<div class="abs" style="left:1451.5px;top:1038px;font-family:'Liberation Serif',serif;font-size:14.5px;line-height:19px;letter-spacing:-0.021px;color:#eceded;white-space:pre;">Line 44, Col 2</div>
<div class="abs" style="left:1571.5px;top:1038px;font-family:'Liberation Serif',serif;font-size:14.5px;line-height:19px;letter-spacing:-0.130px;color:#eceded;white-space:pre;">UTF-8-GUESSED</div>
<div class="abs" style="left:1716.5px;top:1038px;font-family:'Liberation Serif',serif;font-size:14.5px;line-height:19px;letter-spacing:0.078px;color:#eceded;white-space:pre;">LF</div>
<div class="abs" style="left:1770px;top:1038px;font-family:'Liberation Serif',serif;font-size:14.5px;line-height:19px;letter-spacing:-0.057px;color:#eceded;white-space:pre;">RW</div>
<div class="abs" style="left:1833.5px;top:1038px;font-family:'Liberation Serif',serif;font-size:14.5px;line-height:19px;letter-spacing:-0.135px;color:#eceded;white-space:pre;">Mem 47%</div>
<svg class="abs" style="left:1100px;top:1042px" width="13" height="12" viewBox="0 0 13 12"><g transform="scale(0.860)"><path d="M5 1.500L1.500 5L5 8.500M6.500 1.500L10 5" fill="none" stroke="#fafafa" stroke-width="1.500"/><path d="M6 10.500L8.200 12.800L13 7.500" fill="none" stroke="#fafafa" stroke-width="1.600"/></g></svg>
<svg class="abs" style="left:1266px;top:1042px" width="13" height="12" viewBox="0 0 13 12"><g transform="scale(0.880)"><path d="M6.500 1L12 3.800V10.200L6.500 13L1 10.200V3.800z" fill="none" stroke="#fafafa" stroke-width="1.500"/><path d="M1 3.800L6.500 6.800L12 3.800M6.500 6.800V13" fill="none" stroke="#fafafa" stroke-width="1.400"/></g></svg>
<div class="abs" style="left:0;top:1061px;width:1920px;height:19px;background:linear-gradient(90deg,#1b1b1b 0px,#1f2020 110px,#2c3235 250px,#333e43 420px,#35444a 560px,#3a4246 700px,#36464c 800px,#36474e 1050px,#3d3b3e 1110px,#4a2f2d 1180px,#4d2c2a 1380px,#3a2624 1440px,#2b2423 1500px,#33302e 1560px,#3e3c3a 1640px,#353332 1720px,#1f1f1f 1775px,#1b1b1b 1920px)"></div>
<div class="abs" style="left:496px;top:1062px;width:61px;height:18px;background:#59646a"></div>
<svg class="abs" style="left:514px;top:1070px" width="24" height="10" viewBox="0 0 24 10"><path d="M3 3.500h18M7 3.500L1 10M12 1v9M17 3.500l6 6.500M8 1l8 8M16 1l-8 8" fill="none" stroke="#fff" stroke-width="1.500"/></svg>
<svg class="abs" style="left:19px;top:1075px" width="22" height="5" viewBox="0 0 22 5"><path d="M1 3.500L9.500 1.800V5H1zM11 1.500L21 0V5H11z" fill="#fff"/></svg>
<svg class="abs" style="left:86px;top:1075px" width="16" height="5" viewBox="0 0 16 5"><circle cx="8" cy="8.500" r="7" fill="none" stroke="#fff" stroke-width="1.400"/></svg>
<svg class="abs" style="left:148px;top:1070px" width="22" height="10" viewBox="0 0 22 10"><ellipse cx="9" cy="11" rx="9" ry="7" fill="#e8e8e6"/><path d="M14 4L18 0.500L20 3.500L16 6z" fill="#e0a86a"/></svg>
<div class="abs" style="left:204px;top:1071px;width:23px;height:9px;background:#7e8c93;border-radius:1px"></div><div class="abs" style="left:206px;top:1073px;width:19px;height:7px;background:#3cc8e8"></div>
<svg class="abs" style="left:262px;top:1072px" width="30" height="8" viewBox="0 0 30 8"><path d="M0 8L15 0.500L30 8z" fill="#1672c8"/></svg>
<svg class="abs" style="left:326px;top:1073px" width="29" height="7" viewBox="0 0 29 7"><path d="M0 7V1q0-1 1-1h9l2 2.500h16V7z" fill="#f2c24a"/><path d="M0 3h12v1H0z" fill="#d89f22"/></svg>
<svg class="abs" style="left:389px;top:1071px" width="27" height="9" viewBox="0 0 27 9"><circle cx="13.500" cy="13.500" r="13" fill="#e34a3c"/><circle cx="13.500" cy="14" r="6" fill="#f4f4f4"/></svg>
<svg class="abs" style="left:449px;top:1070px" width="29" height="10" viewBox="0 0 29 10"><defs><linearGradient id="eg" x1="0" x2="1"><stop offset="0" stop-color="#1a8fd8"/><stop offset="0.600" stop-color="#28c3d0"/><stop offset="1" stop-color="#4cd06a"/></linearGradient></defs><circle cx="14.500" cy="14.500" r="14" fill="url(#eg)"/></svg>
<svg class="abs" style="left:1456px;top:1073px" width="14" height="7" viewBox="0 0 14 7"><path d="M7 0Q12 3 10 7H3Q9 5 7 0z" fill="#f5c518"/></svg>
<div class="abs sans" style="left:1492px;top:1074px;font-size:15px;line-height:18px;color:#e8e8e8;white-space:pre;letter-spacing:0.500px">2°C</div>
<svg class="abs" style="left:1540px;top:1075px" width="72" height="5" viewBox="0 0 72 5"><g fill="none" stroke="#e6e6e6" stroke-width="1.200"><path d="M3 5L8 0.500L12 3M5 3.500h6M19 1.500h12M25 0v5M21 4h8M37 0.500v4.500M37 1h4v4M43 0.500h9M47 0v5M44 3h7M56 0.500v4.500M56 1h3M62 0l-2 3M62 0l5 3.500M61 4h5"/></g></svg>
<svg class="abs" style="left:1663px;top:1077px" width="70" height="3" viewBox="0 0 70 3"><g fill="none" stroke="#e6e6e6" stroke-width="1.300"><path d="M1 0.600h20V3M1 0.600V3M37 1h14M37 0v3M51 0v3M44 0v3"/><rect x="62" y="0" width="8" height="3" fill="#fff" stroke="none"/></g></svg>
<svg class="abs" style="left:1772px;top:1067.5px" width="30" height="14" viewBox="0 0 30 14"><g fill="none" stroke="#fff" stroke-width="1.300"><path d="M0.500 1.500h13M7 1.500V14M7.500 5.500l4 3"/><path d="M19.500 0.500L16.500 5M18 3h10M15.500 8h14M22.500 3v11"/></g></svg>
<div class="abs sans" style="left:1806px;top:1065.500px;font-size:15px;line-height:18px;color:#fff;white-space:pre;letter-spacing:-0.300px">09:07</div>
<div class="abs" style="left:1868px;top:1075px;width:22px;height:5px;background:#fff"></div>
<div class="abs" style="left:1914px;top:1061px;width:1px;height:19px;background:#6a6a6a"></div>
<svg class="abs" style="left:0;top:0;pointer-events:none" width="1920" height="1080" viewBox="0 0 1920 1080"><path d="M557 885.5 C560.8 886.9 570.0 891.4 580 894 C590.0 896.6 604.5 898.8 617 901 C629.5 903.2 640.3 905.3 655 907.5 C669.7 909.7 688.3 912.6 705 914 C721.7 915.4 738.3 916.0 755 916 C771.7 916.0 790.5 915.4 805 914 C819.5 912.6 831.2 910.5 842 907.5 C852.8 904.5 863.5 900.2 870 896 C876.5 891.8 878.5 888.9 881 882.5 C883.5 876.1 884.3 867.9 885 857.5 C885.7 847.1 885.8 830.0 885 820 C884.2 810.0 883.0 804.2 880 797.5 C877.0 790.8 873.3 785.8 867 780 C860.7 774.2 852.3 768.2 842 762.5 C831.7 756.8 819.5 751.0 805 746 C790.5 741.0 771.7 736.2 755 732.5 C738.3 728.8 725.8 726.9 705 724 C684.2 721.1 655.0 717.5 630 715 C605.0 712.5 580.0 711.5 555 709 C530.0 706.5 497.5 702.2 480 700 C462.5 697.8 466.7 697.3 450 696 C433.3 694.7 405.0 693.3 380 692 C355.0 690.7 326.7 688.9 300 688 C273.3 687.1 243.3 686.8 220 686.5 C196.7 686.2 175.5 686.0 160 686 C144.5 686.0 137.0 685.8 127 686.5 C117.0 687.2 107.5 688.6 100 690 C92.5 691.4 87.5 691.3 82 695 C76.5 698.7 71.2 705.0 67 712 C62.8 719.0 60.5 725.3 57 737 C53.5 748.7 47.7 769.8 46 782 C44.3 794.2 45.2 802.5 47 810 C48.8 817.5 51.2 821.7 57 827 C62.8 832.3 71.5 838.2 82 842 C92.5 845.8 105.3 847.7 120 850 C134.7 852.3 145.0 853.3 170 856 C195.0 858.7 236.7 862.8 270 866 C303.3 869.2 335.0 872.5 370 875 C405.0 877.5 453.3 879.3 480 881 C506.7 882.7 515.0 884.1 530 885 C545.0 885.9 563.3 886.2 570 886.5" fill="none" stroke="#da2a34" stroke-width="1.300"/><path d="M942.5 607.5 C948.8 607.2 957.1 605.5 980 606 C1002.9 606.5 1038.3 609.7 1080 610.5 C1121.7 611.3 1186.7 611.1 1230 611 C1273.3 610.9 1313.3 610.8 1340 610 C1366.7 609.2 1365.0 607.3 1390 606.5 C1415.0 605.7 1456.7 604.9 1490 605 C1523.3 605.1 1560.8 605.8 1590 607 C1619.2 608.2 1646.3 610.8 1665 612.5 C1683.7 614.2 1690.5 615.5 1702 617 C1713.5 618.5 1724.7 619.5 1734 621.5 C1743.3 623.5 1752.2 626.4 1758 629 C1763.8 631.6 1766.7 633.8 1769 637 C1771.3 640.2 1771.7 643.5 1772 648 C1772.3 652.5 1772.1 658.8 1771 664 C1769.9 669.2 1767.8 674.3 1765.6 679 C1763.4 683.7 1761.4 687.7 1758 692 C1754.6 696.3 1752.2 699.9 1745 705 C1737.8 710.1 1726.2 716.7 1715 722.5 C1703.8 728.3 1690.0 735.2 1677.5 740 C1665.0 744.8 1654.6 747.6 1640 751 C1625.4 754.4 1606.7 758.0 1590 760.5 C1573.3 763.0 1556.7 764.8 1540 766 C1523.3 767.2 1506.7 767.7 1490 768 C1473.3 768.3 1454.6 768.7 1440 768 C1425.4 767.3 1415.0 765.8 1402.5 764 C1390.0 762.2 1377.1 759.7 1365 757.5 C1352.9 755.3 1340.0 752.6 1330 751 C1320.0 749.4 1315.2 748.6 1305 748 C1294.8 747.4 1276.5 747.2 1269 747.5 C1261.5 747.8 1262.3 748.7 1260 749.5 C1257.7 750.3 1270.4 752.0 1255 752.5 C1239.6 753.0 1192.5 753.1 1167.5 752.5 C1142.5 751.9 1123.8 750.7 1105 749 C1086.2 747.3 1071.7 745.2 1055 742.5 C1038.3 739.8 1019.6 736.1 1005 732.5 C990.4 728.9 979.2 725.6 967.5 721 C955.8 716.4 943.3 710.2 935 705 C926.7 699.8 922.5 695.4 917.5 690 C912.5 684.6 908.1 678.3 905 672.5 C901.9 666.7 899.7 661.7 899 655 C898.3 648.3 899.2 638.3 901 632.5 C902.8 626.7 906.0 623.3 910 620 C914.0 616.7 919.6 614.6 925 612.5 C930.4 610.4 939.6 608.3 942.5 607.5" fill="none" stroke="#da2a34" stroke-width="1.300"/></svg>
</body></html>
